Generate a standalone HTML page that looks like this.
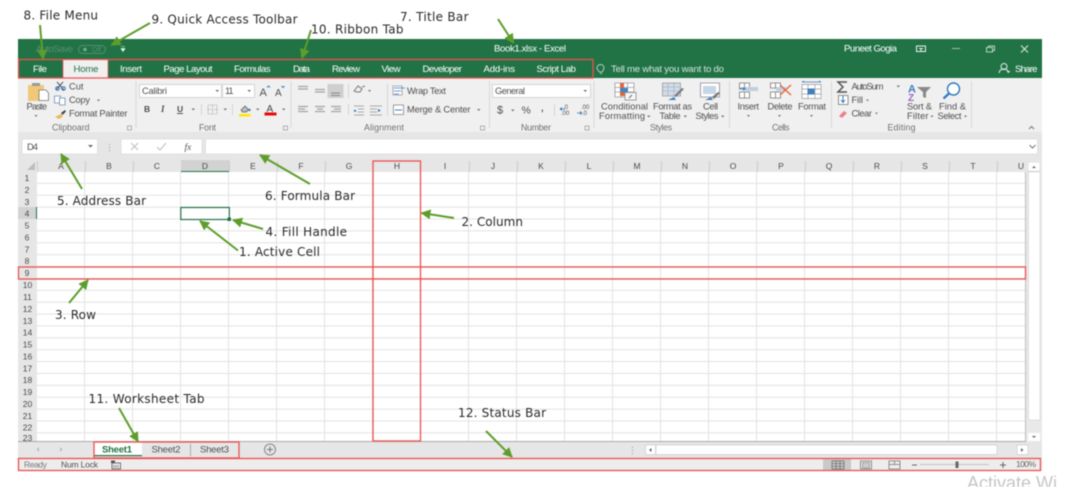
<!DOCTYPE html>
<html><head><meta charset="utf-8"><title>Excel Parts</title>
<style>
html,body{margin:0;padding:0;background:#fff;width:1066px;height:487px;overflow:hidden}
svg{display:block;filter:blur(.5px)}
text{font-family:"Liberation Sans",sans-serif;font-size:9.3px;fill:#505050}
.n{font-family:"DejaVu Sans",sans-serif;font-size:12px;fill:#2a2a2a}
.t{fill:#fff;font-size:9.6px}
.h{fill:#4a4a4a;font-size:8.500px;text-anchor:middle}
.r{fill:#4a4a4a;font-size:8.500px;text-anchor:middle}
.g{fill:#707070;font-size:8.800px}
.a{stroke:#5d9e2b;stroke-width:2;fill:none;marker-end:url(#ar)}
.box{fill:none;stroke:#ee4f4f;stroke-width:1.3}
</style></head><body>
<svg width="1066" height="487" viewBox="0 0 1066 487" xmlns="http://www.w3.org/2000/svg">
<defs>
<marker id="ar" viewBox="0 0 10 10" refX="9" refY="5" markerWidth="5" markerHeight="5" orient="auto"><path d="M0 0L10 5L0 10Z" fill="#5d9e2b"/></marker>
<pattern id="grid" x="37" y="172" width="48" height="11.88" patternUnits="userSpaceOnUse"><path d="M0 11.4H48M47.5 0V12" stroke="#e2e2e2" stroke-width="1" fill="none"/></pattern>
</defs>
<rect width="1066" height="487" fill="#fff"/>
<!-- title + tabs -->
<rect x="18" y="39" width="1024" height="39" fill="#217346"/>
<text x="36" y="52" style="fill:#558f70;font-size:9.500px" textLength="37">AutoSave</text>
<rect x="78.500" y="45.500" width="27" height="8" rx="4" fill="none" stroke="#558f70"/>
<circle cx="85" cy="49.500" r="1.800" fill="#7aa88f"/>
<text x="92" y="52" style="fill:#558f70;font-size:7px">Off</text>
<path d="M121 48.500h4l-2 3zM121 46.500h4" fill="#dfe" stroke="#dfe" stroke-width=".6"/>
<text x="494" y="51.500" class="t" textLength="72">Book1.xlsx  -  Excel</text>
<text x="844" y="51.500" class="t" textLength="53">Puneet Gogia</text>
<path d="M916.500 46h9v5.500h-9zM919 48.500h4M921 48.500v3" fill="none" stroke="#e8f1ec"/>
<path d="M952 48.500h8" stroke="#9cc0ac"/>
<path d="M986.500 47.500h6v4.500h-6zM988.500 47.500v-1.500h6v4.500h-2" fill="none" stroke="#dfeae4" stroke-width=".8"/>
<path d="M1021 45.500l7 7M1028 45.500l-7 7" stroke="#dfeae4"/>
<rect x="63" y="60" width="45" height="18" fill="#f0f0f0"/>
<text x="33" y="72" class="t" textLength="14">File</text>
<text x="73.500" y="72" class="t" style="fill:#217346" textLength="25">Home</text>
<text x="120" y="72" class="t" textLength="22">Insert</text>
<text x="163.500" y="72" class="t" textLength="49">Page Layout</text>
<text x="234" y="72" class="t" textLength="36.500">Formulas</text>
<text x="293" y="72" class="t" textLength="17">Data</text>
<text x="332" y="72" class="t" textLength="28">Review</text>
<text x="381.500" y="72" class="t" textLength="19">View</text>
<text x="422.500" y="72" class="t" textLength="39.500">Developer</text>
<text x="483.500" y="72" class="t" textLength="31.500">Add-ins</text>
<text x="536.500" y="72" class="t" textLength="39.500">Script Lab</text>
<path d="M599.500 72c-2-2-2.500-3-2.500-4a3.500 3.500 0 0 1 7 0c0 1-.5 2-2 4zM600 73.500h2" fill="none" stroke="#d6e6dd" stroke-width=".8"/>
<text x="611" y="72" class="t" style="fill:#d5e5dc" textLength="113">Tell me what you want to do</text>
<circle cx="1004" cy="66.500" r="3" fill="none" stroke="#e3eee8"/>
<path d="M999 73c.5-3 2.500-4 5-4s3.500 1 4.500 4M1007 71.500h3" fill="none" stroke="#e3eee8"/>
<text x="1015" y="72" class="t" textLength="22.500">Share</text>
<!-- ribbon -->
<rect x="18" y="78" width="1024" height="54" fill="#f0f0f0"/>
<rect x="18" y="132" width="1024" height="28" fill="#e6e6e6"/>
<g stroke="#d8d8d8"><path d="M136 81v47M291 81v47M489.500 81v47M594 81v47M729.500 81v47M831.500 81v47M971.500 81v47"/></g>
<!-- clipboard -->
<path d="M28 85h16v16H28z" fill="#f0c878"/><rect x="32" y="83" width="8" height="3" fill="#9a9a9a"/><path d="M39 90h7l2.500 3v7.500H39z" fill="#fff" stroke="#777" stroke-width=".8"/>
<text x="26.500" y="109.500" textLength="20.500">Paste</text>
<path d="M34.500 115h3l-1.500 2z" fill="#777"/>
<path d="M57 82l7 8M63 82l-7 8" stroke="#555" stroke-width="1"/><circle cx="57.500" cy="88.500" r="1.800" fill="none" stroke="#2f72b8"/><circle cx="63.500" cy="88.500" r="1.800" fill="none" stroke="#2f72b8"/>
<text x="69" y="89.500" textLength="14.500">Cut</text>
<path d="M54.500 96h6v7h-6z" fill="#fff" stroke="#6f8fb0" stroke-width=".8"/><path d="M59.500 98h5.500v7h-5.500z" fill="#fff" stroke="#6f8fb0" stroke-width=".8"/>
<text x="69" y="103" textLength="21">Copy</text><path d="M97 99.500h3l-1.500 2z" fill="#777"/>
<path d="M55 117l6-3 2 2.500-4 2.500z" fill="#e8b860"/><path d="M61 113l4-3 1 1.500-3.500 3.500z" fill="#444"/>
<text x="69" y="116.500" textLength="58.500">Format Painter</text>
<text x="52" y="130.500" textLength="37.500" class="g">Clipboard</text>
<rect x="127.500" y="126" width="4" height="4" fill="none" stroke="#888" stroke-width=".6"/>
<!-- font -->
<rect x="139.500" y="84.500" width="82" height="13" fill="#fff" stroke="#d5d5d5"/>
<rect x="222.500" y="84.500" width="32" height="13" fill="#fff" stroke="#d5d5d5"/>
<text x="142" y="94" textLength="25">Calibri</text><path d="M215.500 90h3.500l-1.750 2z" fill="#666"/>
<text x="225" y="94" textLength="8.500">11</text><path d="M247.500 90h3.500l-1.750 2z" fill="#666"/>
<text x="259.500" y="96" style="font-size:11px">A</text><path d="M267 87.500l1.500-1.500 1.500 1.500" stroke="#3f7fbf" fill="none"/>
<text x="275" y="96" style="font-size:10px">A</text><path d="M281.500 86l1.500 1.500 1.500-1.500" stroke="#3f7fbf" fill="none"/>
<text x="144" y="112" style="font-weight:bold;font-size:8.500px">B</text>
<text x="161" y="112" style="font-style:italic;font-weight:bold;font-size:9px;font-family:'Liberation Serif',serif">I</text>
<text x="177" y="112" style="font-weight:bold;font-size:8.500px">U</text><path d="M177 113.500h6" stroke="#555"/>
<path d="M191.500 108.500h3.500l-1.750 2z" fill="#777"/><path d="M201.500 104v11" stroke="#d5d5d5"/>
<path d="M208 105h9v9h-9zM212.500 105v9M208 109.500h9" fill="none" stroke="#999" stroke-width=".8" stroke-dasharray="1 1"/>
<path d="M223.500 108.500h3.500l-1.750 2z" fill="#777"/><path d="M232.500 104v11" stroke="#d5d5d5"/>
<rect x="239" y="114" width="11.500" height="2.500" fill="#ffe800"/><path d="M241 110l4-4 3.500 3.500-2 2.500h-4z" fill="#bbb" stroke="#555" stroke-width=".7"/><circle cx="249.500" cy="110" r="1.200" fill="#3f7fbf"/>
<path d="M256 108.500h3.500l-1.750 2z" fill="#777"/>
<rect x="264.500" y="112.500" width="12" height="3" fill="#ea0a0a"/><text x="266.500" y="112" style="font-size:10px;fill:#444">A</text>
<path d="M282 108.500h3.500l-1.750 2z" fill="#777"/>
<text x="199" y="130.500" textLength="17" class="g">Font</text>
<rect x="283.500" y="126" width="4" height="4" fill="none" stroke="#888" stroke-width=".6"/>
<!-- alignment -->
<g stroke="#a4a4a4" stroke-width="1.200">
<path d="M298 86.500h10M298 89h10M315 89.500h10M315 92h10"/><path d="M298 106.500h10M298 109h7M298 111.500h10M315 106.500h10M317 109h6M315 111.500h10M331 106.500h10M334 109h7M331 111.500h10"/></g>
<rect x="327.500" y="84" width="16" height="14" fill="#cfcfcf"/><path d="M331 93h9M331 95.500h9" stroke="#888"/>
<path d="M348.500 84v14M348.500 104v11" stroke="#d5d5d5"/>
<path d="M354 91l4-5 4 3-2 3h-3zM362 87l3-1" fill="none" stroke="#777"/><path d="M368 90h3l-1.500 2z" fill="#777"/>
<path d="M354 106h10M358 109h6M358 112h6M354 115h10" stroke="#a9a9a9"/><path d="M354 109.500l3 1.500-3 1z" fill="#2f78c0"/>
<path d="M370 106h12M370 109h7M370 112h7M370 115h12" stroke="#a9a9a9"/><path d="M378 109l3 1.500-3 1.500z" fill="#2f78c0"/>
<path d="M387.500 84v32" stroke="#d5d5d5"/>
<path d="M393 86h9v9h-9z" fill="#fff" stroke="#999" stroke-width=".8"/><path d="M394 88h11M394 91h7M394 94h5" stroke="#3f7fbf" stroke-width=".8"/>
<text x="407" y="94" textLength="39">Wrap Text</text>
<rect x="393.500" y="105" width="10" height="9.500" fill="#fff" stroke="#888" stroke-width=".8"/><path d="M395 110h7" stroke="#3f7fbf"/>
<text x="407" y="112.500" textLength="63.500">Merge &amp; Center</text><path d="M477 109h3.500l-1.750 2z" fill="#777"/>
<text x="364" y="130.500" textLength="40" class="g">Alignment</text>
<rect x="480.500" y="126" width="4" height="4" fill="none" stroke="#888" stroke-width=".6"/>
<!-- number -->
<rect x="492.500" y="84.500" width="98" height="13" fill="#fff" stroke="#d5d5d5"/>
<text x="495" y="94" textLength="30">General</text><path d="M583.500 90h3.500l-1.750 2z" fill="#666"/>
<text x="497" y="113.500" style="font-size:11px">$</text><path d="M511 109.500h3.500l-1.750 2z" fill="#777"/>
<text x="521.500" y="113.500" style="font-size:10.500px">%</text>
<text x="541" y="111" style="font-size:9px;font-weight:bold">,</text>
<path d="M554.500 104v12" stroke="#d5d5d5"/>
<path d="M560 109h5M560 109l2-1.500M560 109l2 1.500" stroke="#2f78c0" fill="none" stroke-width=".8"/><text x="563" y="109" style="font-size:6px">.0</text><text x="561" y="115" style="font-size:6px">.00</text>
<path d="M577 113h5M582 113l-2-1.500M582 113l-2 1.500" stroke="#2f78c0" fill="none" stroke-width=".8"/><text x="581" y="109" style="font-size:6px">.00</text><text x="582" y="115" style="font-size:6px">.0</text>
<text x="521" y="130.500" textLength="30" class="g">Number</text>
<rect x="585" y="126" width="4" height="4" fill="none" stroke="#888" stroke-width=".6"/>
<!-- styles -->
<path d="M615 83h19v14h-19zM615 87.500h19M615 92h19M621 83v14M627.500 83v14" fill="#fff" stroke="#9a9a9a" stroke-width=".8"/>
<rect x="620" y="83" width="4" height="5" fill="#e0663a"/><rect x="620" y="88" width="8" height="4" fill="#3f86c8"/><rect x="620" y="92" width="5" height="4" fill="#e0663a"/>
<rect x="625" y="92.500" width="11" height="7.500" fill="#f7f7f7" stroke="#888" stroke-width=".8"/><path d="M629 98l3-3" stroke="#666"/>
<text x="601" y="109.500" textLength="47">Conditional</text>
<text x="599" y="119" textLength="46">Formatting</text><path d="M647 115.500h3.500l-1.750 2z" fill="#777"/>
<path d="M662.500 83h18v13h-18z" fill="#cfdcea" stroke="#9a9a9a" stroke-width=".8"/><path d="M662.500 87h18M662.500 91h18M668 83v13M674 83v13" stroke="#aaa" stroke-width=".6"/>
<path d="M668 100l6-3 2 3z" fill="#3f7fbf"/><path d="M674 96l8-8 2 1-8 8z" fill="#777"/>
<text x="653" y="109.500" textLength="39">Format as</text>
<text x="659.500" y="119" textLength="21">Table</text><path d="M683.500 115.500h3.500l-1.750 2z" fill="#777"/>
<path d="M700.500 83h19v14h-19z" fill="#fff" stroke="#8a8a8a" stroke-width=".8"/><rect x="703" y="86" width="13" height="8" fill="#c5d6e8"/>
<path d="M705 100l6-3 2 3z" fill="#3f7fbf"/><path d="M712 97l6-5 2 1-6 6z" fill="#777"/>
<text x="703" y="109.500" textLength="15">Cell</text>
<text x="695.500" y="119" textLength="23">Styles</text><path d="M721 115.500h3.500l-1.750 2z" fill="#777"/>
<text x="650" y="130.500" textLength="22" class="g">Styles</text>
<!-- cells -->
<path d="M739.500 83h10v5h-10zM744.500 83v5M739.500 92h10v6h-10zM744.500 92v6" fill="#fff" stroke="#777" stroke-width=".8"/>
<rect x="745" y="87" width="13" height="4" fill="#c0cfdf"/><path d="M739 89h6l-2-1.500M745 89l-2 1.500" stroke="#2f78c0" fill="none" stroke-width=".8"/>
<text x="737.500" y="109.500" textLength="21.500">Insert</text><path d="M747 115h3l-1.500 2z" fill="#777"/>
<path d="M770.500 83h10v5h-10zM775.500 83v5M770.500 92h10v6h-10zM775.500 92v6" fill="#fff" stroke="#777" stroke-width=".8"/>
<rect x="776" y="87" width="10" height="4" fill="#c0cfdf"/><path d="M780 85l11 10M791 85l-11 10" stroke="#e0663a" stroke-width="1.300"/>
<text x="767.500" y="109.500" textLength="25">Delete</text><path d="M778 115h3l-1.500 2z" fill="#777"/>
<path d="M802 84.500h19v14h-19zM808 84.500v14M815 84.500v14M802 89h19M802 94h19" fill="#fff" stroke="#999" stroke-width=".7"/>
<rect x="807.500" y="88.500" width="7" height="6" fill="#3d7fc0"/><path d="M802 82h19M802 82l2-1M821 82l-2-1" stroke="#3d7fc0" stroke-width=".7" fill="none"/>
<text x="798" y="109.500" textLength="28">Format</text><path d="M810 115h3l-1.500 2z" fill="#777"/>
<text x="772" y="130.500" textLength="17.500" class="g">Cells</text>
<!-- editing -->
<path d="M847 82h-9l5 5-5 5h9" fill="none" stroke="#555" stroke-width="1.500"/>
<text x="851.500" y="89.500" textLength="32">AutoSum</text><path d="M896.500 85.500h3.500l-1.750 2z" fill="#777"/>
<rect x="838.500" y="95.500" width="9.500" height="9" fill="#fff" stroke="#777" stroke-width=".8"/><path d="M843 96v6M841 100l2 2.500 2-2.500" stroke="#2f78c0" fill="none"/>
<text x="851.500" y="103" textLength="11.500">Fill</text><path d="M866 99.500h3l-1.500 2z" fill="#888"/>
<path d="M839 116l5-5 3 2-5 5z" fill="#ee7f88"/>
<text x="851.500" y="116.500" textLength="20.500">Clear</text><path d="M875 112.500h3l-1.500 2z" fill="#888"/>
<text x="908" y="92.500" style="font-size:11px;font-weight:bold;fill:#3f7fbf">A</text><text x="908" y="101" style="font-size:10px;font-weight:bold;fill:#a45fc0">Z</text>
<path d="M917 87h14l-5 5v6l-3-1v-5z" fill="#888"/>
<circle cx="953.500" cy="89" r="6" fill="#fff" stroke="#2f78c0" stroke-width="1.400"/><path d="M949 93.500l-5.500 5" stroke="#2f78c0" stroke-width="2.200"/>
<text x="907" y="109.500" textLength="25">Sort &amp;</text>
<text x="907" y="119" textLength="21.500">Filter</text><path d="M930.500 115.500h3l-1.500 2z" fill="#777"/>
<text x="939" y="109.500" textLength="27">Find &amp;</text>
<text x="937.500" y="119" textLength="24">Select</text><path d="M964 115.500h3l-1.500 2z" fill="#777"/>
<text x="887.500" y="130.500" textLength="28" class="g">Editing</text>
<path d="M1029 129l2.500-2.500 2.500 2.500" fill="none" stroke="#777"/>
<!-- formula bar -->
<rect x="22" y="139" width="75.500" height="15" fill="#fff" stroke="#dedede" stroke-width=".8"/>
<text x="27" y="150" style="font-size:9.500px" textLength="11">D4</text><path d="M88 145h5l-2.500 2.500z" fill="#666"/>
<path d="M109.500 144v1M109.500 147v1M109.500 150v1" stroke="#999"/>
<rect x="121" y="139" width="81" height="15" fill="#fff" stroke="#dedede" stroke-width=".8"/>
<path d="M131 143l7 7M138 143l-7 7" stroke="#bdbdbd"/><path d="M157 147l3 3 6-7" fill="none" stroke="#bdbdbd"/>
<text x="184.500" y="150" style="font-style:italic;font-size:9.500px;font-family:'Liberation Serif',serif">fx</text>
<rect x="205.500" y="139" width="832" height="15" fill="#fff" stroke="#dedede" stroke-width=".8"/>
<path d="M1029.500 145l3 3 3-3" fill="none" stroke="#777"/>
<!-- grid -->
<rect x="37" y="172" width="989" height="270" fill="#fff"/>
<rect x="37" y="172" width="989" height="270" fill="url(#grid)"/>
<rect x="18" y="160" width="1008" height="12" fill="#e6e6e6"/>
<rect x="18" y="172" width="19" height="270" fill="#e6e6e6"/>
<rect x="181" y="160" width="48" height="12" fill="#d2d2d2"/><rect x="181" y="171" width="48" height="1" fill="#217346"/>
<rect x="18" y="207" width="19" height="12" fill="#d2d2d2"/><rect x="36" y="207" width="1" height="12" fill="#217346"/>
<path d="M35 162v8h-8z" fill="#bdbdbd"/>
<path d="M37.500 161v11M85.500 161v11M133.500 161v11M229.500 161v11M277.500 161v11M325.500 161v11M469.500 161v11M517.500 161v11M565.500 161v11M613.500 161v11M661.500 161v11M709.500 161v11M757.500 161v11M805.500 161v11M853.500 161v11M901.500 161v11M949.500 161v11M997.500 161v11" stroke="#cacaca"/>
<g>
<text x="61" y="169" class="h">A</text><text x="109" y="169" class="h">B</text><text x="157" y="169" class="h">C</text><text x="205" y="169" class="h">D</text><text x="253" y="169" class="h">E</text><text x="301" y="169" class="h">F</text><text x="349" y="169" class="h">G</text><text x="397" y="169" class="h">H</text><text x="445" y="169" class="h">I</text><text x="493" y="169" class="h">J</text><text x="541" y="169" class="h">K</text><text x="589" y="169" class="h">L</text><text x="637" y="169" class="h">M</text><text x="685" y="169" class="h">N</text><text x="733" y="169" class="h">O</text><text x="781" y="169" class="h">P</text><text x="829" y="169" class="h">Q</text><text x="877" y="169" class="h">R</text><text x="925" y="169" class="h">S</text><text x="973" y="169" class="h">T</text><text x="1021" y="169" class="h">U</text>
</g>
<g>
<text x="27" y="181" class="r">1</text><text x="27" y="193" class="r">2</text><text x="27" y="204.800" class="r">3</text><text x="27" y="216.500" class="r">4</text><text x="27" y="228.500" class="r">5</text><text x="27" y="240.500" class="r">6</text><text x="27" y="252.400" class="r">7</text><text x="27" y="264.200" class="r">8</text><text x="27" y="276" class="r">9</text><text x="27.500" y="288" class="r">10</text><text x="27.500" y="300" class="r">11</text><text x="27.500" y="312" class="r">12</text><text x="27.500" y="323.800" class="r">13</text><text x="27.500" y="335.700" class="r">14</text><text x="27.500" y="347.500" class="r">15</text><text x="27.500" y="359.400" class="r">16</text><text x="27.500" y="371.300" class="r">17</text><text x="27.500" y="383.200" class="r">18</text><text x="27.500" y="395" class="r">19</text><text x="27.500" y="406.900" class="r">20</text><text x="27.500" y="418.800" class="r">21</text><text x="27.500" y="430.700" class="r">22</text><text x="27.500" y="441" class="r">23</text>
</g>
<!-- active cell -->
<rect x="180.800" y="207.500" width="48.500" height="12" fill="#fff" stroke="#217346" stroke-width="1.200"/>
<rect x="227.500" y="217.500" width="3.500" height="3.500" fill="#217346"/>
<!-- v scrollbar -->
<rect x="1026" y="160" width="16" height="299" fill="#e9e9e9"/>
<path d="M1025.500 172v270" stroke="#bdbdbd"/>
<rect x="1028" y="162" width="12" height="9" fill="#fff" stroke="#d5d5d5" stroke-width=".6"/><path d="M1032 168l2-2 2 2z" fill="#666"/>
<rect x="1028.500" y="172" width="11.500" height="248" fill="#fff" stroke="#cfcfcf" stroke-width=".6"/>
<rect x="1028" y="433" width="12" height="8" fill="#fff"/><path d="M1032 436l2 2 2-2z" fill="#666"/>
<!-- sheet tabs -->
<rect x="18" y="442" width="1024" height="17" fill="#e6e6e6"/>
<path d="M18 441.500h1008" stroke="#a9a9a9"/>
<path d="M39 447l-2.500 2.500 2.500 2.500zM60 447l2.500 2.500-2.500 2.500z" fill="#bdbdbd"/>
<rect x="94" y="442" width="48" height="14" fill="#fff"/><rect x="94" y="455" width="48" height="1.200" fill="#217346"/>
<text x="102" y="452.500" textLength="30" style="font-weight:bold;font-size:9.500px;fill:#217346">Sheet1</text>
<text x="151.500" y="452.500" textLength="29" style="font-size:9.500px">Sheet2</text>
<path d="M190.500 444v12" stroke="#aaa"/>
<text x="200" y="452.500" textLength="29" style="font-size:9.500px">Sheet3</text>
<circle cx="270" cy="449.500" r="5.500" fill="none" stroke="#888"/><path d="M267 449.500h6M270 446.500v6" stroke="#777"/>
<path d="M632.500 447v1M632.500 450v1M632.500 453v1" stroke="#999"/>
<rect x="645.500" y="445" width="10" height="9.500" fill="#fff" stroke="#ccc" stroke-width=".7"/><path d="M651.500 448l-2.500 2 2.500 2z" fill="#666"/>
<rect x="656" y="445" width="341" height="9.500" fill="#fff" stroke="#ccc" stroke-width=".7"/>
<rect x="1017" y="445" width="11" height="9.500" fill="#fff" stroke="#ccc" stroke-width=".7"/><path d="M1021 448l2.500 2-2.500 2z" fill="#666"/>
<!-- status -->
<rect x="18" y="459" width="1024" height="12" fill="#ededed"/>
<text x="24" y="467.500" textLength="23" style="font-size:8.500px;fill:#777">Ready</text>
<text x="61" y="467.500" textLength="37" style="font-size:8.500px">Num Lock</text>
<rect x="112" y="463" width="8.500" height="6" fill="none" stroke="#666" stroke-width=".9"/><rect x="111" y="460.500" width="4" height="2.500" fill="#555"/><path d="M114 465v3M116 465v3M118 465v3" stroke="#666" stroke-width=".7"/>
<rect x="823" y="459" width="28" height="11.500" fill="#c9c9c9"/>
<path d="M832 461h12v8h-12zM836 461v8M840 461v8M832 463.700h12M832 466.300h12" fill="none" stroke="#666" stroke-width=".7"/>
<path d="M860.500 461h11v8h-11z" fill="none" stroke="#777" stroke-width=".8"/><rect x="862.500" y="462.500" width="7" height="5.500" fill="#ccc" stroke="#777" stroke-width=".5"/>
<path d="M889 461h11v8h-11zM894.500 461v3.500M889 464.500h11" fill="none" stroke="#777" stroke-width=".8"/>
<path d="M912 465h5M1000 465h6M1003 462v6" stroke="#666"/>
<path d="M920 464.500h69" stroke="#c2c2c2"/>
<rect x="955.500" y="461.500" width="3" height="6.500" fill="#666"/>
<text x="1016" y="467" textLength="20" style="font-size:8.500px;fill:#666">100%</text>
<!-- red boxes -->
<rect x="18.500" y="59.500" width="574.500" height="18.500" class="box"/>
<rect x="373" y="161" width="47.500" height="280" class="box"/>
<rect x="18.500" y="267" width="1007" height="12" class="box"/>
<rect x="94" y="442" width="145" height="16" class="box"/>
<rect x="18.500" y="458.500" width="1022" height="12" class="box"/>
<rect x="63" y="59.500" width="45" height="18.500" fill="none" stroke="#ee5f5f" stroke-width=".8"/>
<!-- arrows -->
<path class="a" d="M238 250.500L200 221"/>
<path class="a" d="M454 218L421.500 213"/>
<path class="a" d="M69 303L88 280"/>
<path class="a" d="M263 229L233 220"/>
<path class="a" d="M82 189L61 154"/>
<path class="a" d="M310 184L260 155"/>
<path class="a" d="M498 19L513.500 43"/>
<path class="a" d="M40 25L43 59"/>
<path class="a" d="M150 23L111.500 45"/>
<path class="a" d="M311 30L302 58"/>
<path class="a" d="M119 408L138 441.500"/>
<path class="a" d="M486 431L512 457"/>
<!-- annotations -->
<text class="n" x="23.500" y="19.500" textLength="74.500">8. File Menu</text>
<text class="n" x="151.500" y="23.500" textLength="146">9. Quick Access Toolbar</text>
<text class="n" x="311" y="33.500" textLength="92.500">10. Ribbon Tab</text>
<text class="n" x="400" y="21" textLength="68.500">7. Title Bar</text>
<text class="n" x="57" y="205" textLength="89">5. Address Bar</text>
<text class="n" x="265" y="200" textLength="90">6. Formula Bar</text>
<text class="n" x="265.500" y="236" textLength="81.500">4. Fill Handle</text>
<text class="n" x="239" y="256" textLength="81">1. Active Cell</text>
<text class="n" x="461.500" y="226" textLength="61.500">2. Column</text>
<text class="n" x="55" y="319" textLength="41">3. Row</text>
<text class="n" x="88.500" y="403" textLength="116">11. Worksheet Tab</text>
<text class="n" x="458" y="417" textLength="88">12. Status Bar</text>
<text x="967" y="489" style="font-size:18px;fill:#c6c6c6">Activate Wi</text>
</svg>
</body></html>
